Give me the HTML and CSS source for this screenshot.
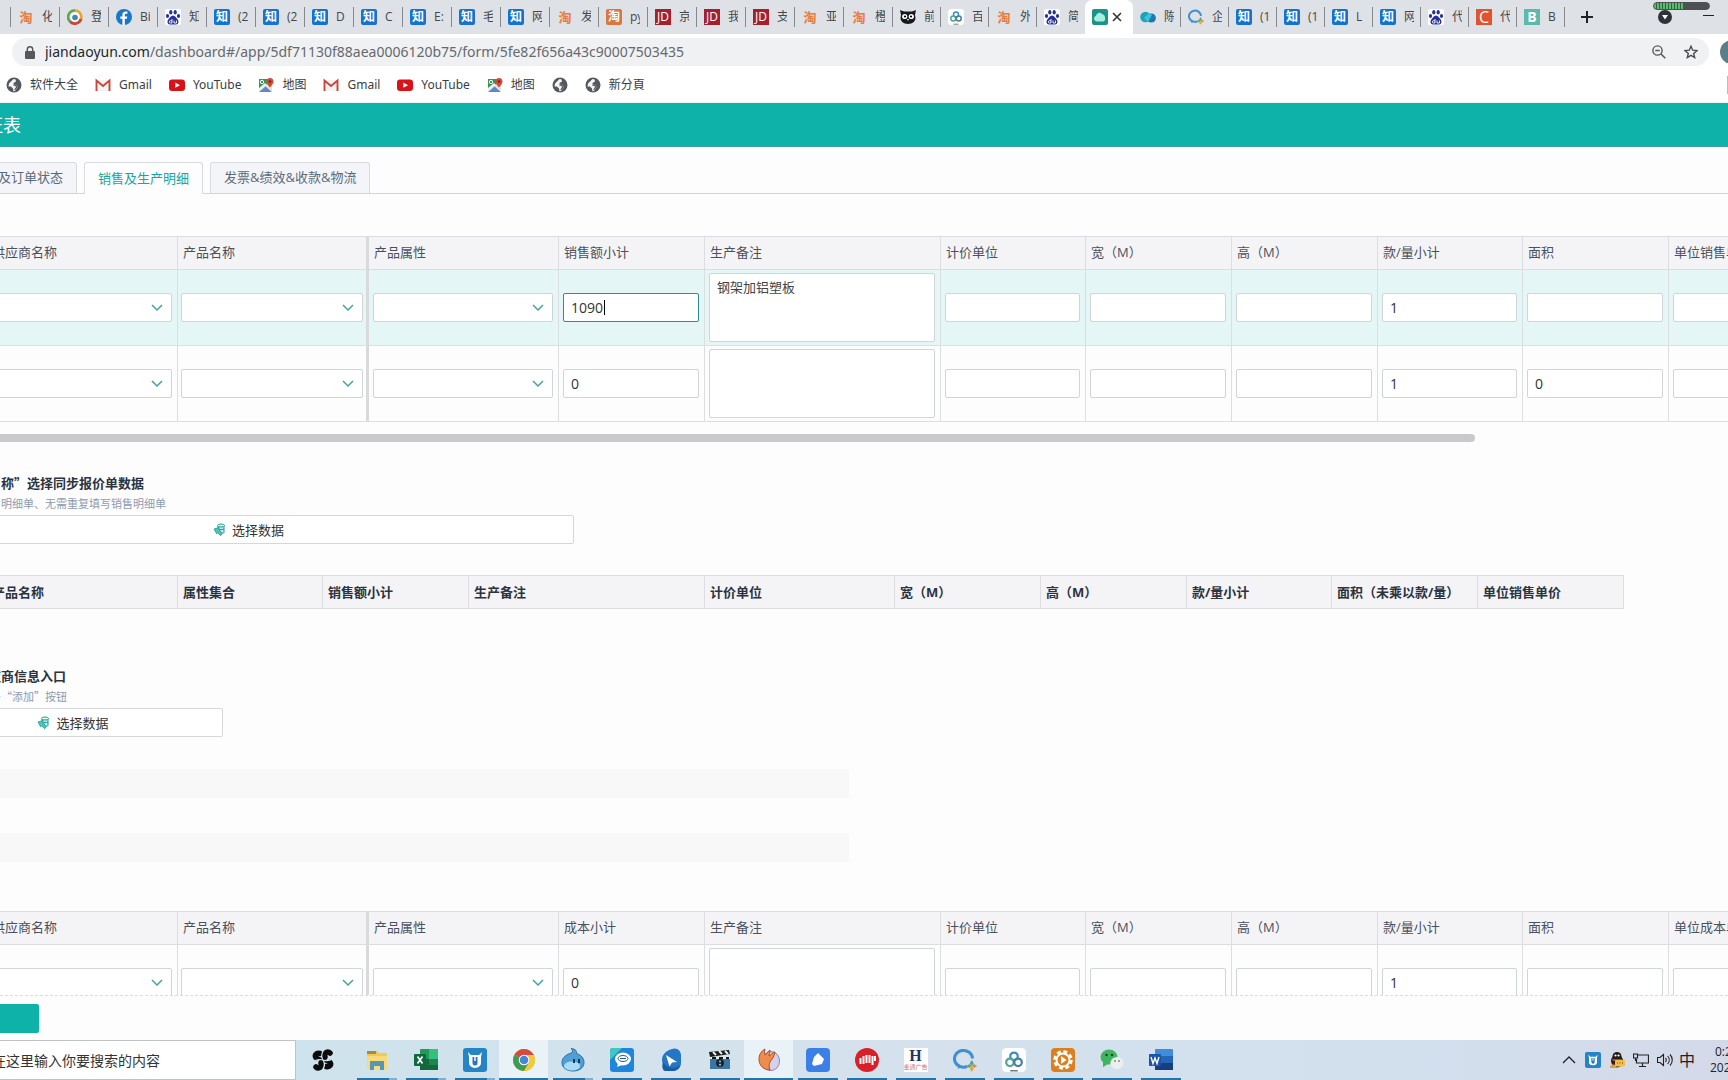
FILE: index.html
```html
<!DOCTYPE html>
<html lang="zh-CN">
<head>
<meta charset="utf-8">
<title>简道云</title>
<link rel="stylesheet" href="styles.css">
</head>
<body>
<svg class="sprite" aria-hidden="true">
  <symbol id="i-globe" viewBox="0 0 16 16"><circle cx="8" cy="8" r="7.500" fill="#55585c"/><path d="M3 6.500L7.500 2l2 .5.5 2-2.500 1.500v1.500l3 .5 1 2-2 3.500-2 1-.5-3-2-2H2.500z" fill="#f4f5f6"/><path d="M7.500 8.500c1.500-.8 3 0 3 1.500s-1.500 1.500-1.500 3" fill="none" stroke="#55585c" stroke-width="1.200"/></symbol>
  <symbol id="i-gmail" viewBox="0 0 16 16"><path d="M1 3h14v11H1z" fill="#f6f2f2"/><path d="M1.500 14V3.500L8 9l6.500-5.500V14" fill="none" stroke="#c8463f" stroke-width="1.900"/></symbol>
  <symbol id="i-yt" viewBox="0 0 16 16"><rect x="0" y="2.500" width="16" height="11.500" rx="3" fill="#d9121a"/><path d="M6.300 5.600v5.200L11 8.200z" fill="#fff"/></symbol>
  <symbol id="i-map" viewBox="0 0 16 16"><path d="M1 2h9v6L1 15z" fill="#38955a"/><path d="M1 15l7-6 6 6z" fill="#5b87d6"/><path d="M7 9l3-3 4 4v5z" fill="#e8e2d0"/><path d="M1 11l6-5 2 2-8 7z" fill="#f0efe8"/><path d="M12 1a3.500 3.500 0 0 0-3.500 3.500C8.500 7 12 10.500 12 10.500S15.500 7 15.500 4.500A3.500 3.500 0 0 0 12 1z" fill="#d24a3e"/><circle cx="12" cy="4.500" r="1.200" fill="#7d2119"/><circle cx="4" cy="5" r="1.700" fill="none" stroke="#fff"/></symbol>
  <symbol id="i-paw" viewBox="0 0 16 16"><rect width="16" height="16" fill="#fff"/><g fill="#27309b"><ellipse cx="2.500" cy="7" rx="1.600" ry="2.100"/><ellipse cx="5.800" cy="3.200" rx="1.600" ry="2.200"/><ellipse cx="10.200" cy="3.200" rx="1.600" ry="2.200"/><ellipse cx="13.500" cy="7" rx="1.600" ry="2.100"/><path d="M8 6.500c2 0 3 2.300 4.500 3.800 1.700 1.700 1.200 5.200-1.500 5.200H5c-2.700 0-3.200-3.500-1.500-5.200C5 8.800 6 6.500 8 6.500z"/></g><path d="M7 10v4H5.500a1 1 0 0 1 0-2.300H7M9 11.500V14h2.500v-2.500" fill="none" stroke="#fff" stroke-width=".9"/></symbol>
  <symbol id="i-owl" viewBox="0 0 16 16"><path d="M0 1l4 1.500h8L16 1l-1 5 .5 3c0 3-3 6-7.500 6S.5 12 .5 9L1 6z" fill="#17191b"/><circle cx="4.700" cy="7.500" r="2.600" fill="#fff"/><circle cx="11.300" cy="7.500" r="2.600" fill="#fff"/><circle cx="5" cy="7.500" r="1.100"/><circle cx="11" cy="7.500" r="1.100"/><path d="M7 10h2l-1 2z" fill="#fff"/></symbol>
  <symbol id="i-pan" viewBox="0 0 16 16"><rect width="16" height="16" rx="3" fill="#fff"/><g fill="none" stroke-width="1.500"><circle cx="8" cy="5.500" r="2.500" stroke="#3b8fc0"/><circle cx="5.300" cy="9.500" r="2.500" stroke="#4fa69b"/><circle cx="10.700" cy="9.500" r="2.500" stroke="#487f9d"/></g><path d="M5.500 15.200h5" stroke="#555" stroke-width=".8"/></symbol>
  <symbol id="i-ring" viewBox="0 0 16 16"><g fill="none" stroke-width="2.600"><path d="M3 12.500A6.500 6.500 0 0 1 8 1.500" stroke="#5aa84a"/><path d="M8 1.500a6.500 6.500 0 0 1 5 10.500" stroke="#e8a53a"/><path d="M14 10A6.500 6.500 0 0 1 3 12.500" stroke="#cc4438"/></g><circle cx="8" cy="8" r="4.500" fill="#fff"/><circle cx="8" cy="8.500" r="2.800" fill="#3f86b5"/></symbol>
  <symbol id="i-fb" viewBox="0 0 16 16"><circle cx="8" cy="8" r="8" fill="#1877c9"/><path d="M8.800 16V9.800h2.100l.4-2.400H8.800V6c0-.8.4-1.300 1.400-1.300h1.200V2.600C9 2.100 6.400 2.500 6.400 5.500v1.900H4.300v2.400h2.100V16z" fill="#fff"/></symbol>
  <symbol id="i-jdy" viewBox="0 0 16 16"><rect width="16" height="16" fill="#1c9385"/><path d="M4.500 12.500a3 3 0 0 1-.5-5.800A3.500 3.500 0 0 1 10 5a3.800 3.800 0 0 1 3 3.500c.6 2.500-.5 4-2.500 4z" fill="#a5efe2"/></symbol>
  <symbol id="i-cloud" viewBox="0 0 16 16"><circle cx="5.500" cy="8" r="5.300" fill="#1fa3b8"/><circle cx="11.300" cy="9" r="4.600" fill="#1b78b5"/><path d="M4 9l5-5 3 2-4 7z" fill="#38c3dc"/></symbol>
  <symbol id="i-wework" viewBox="0 0 16 16"><path d="M9.500 12.300A6 5.600 0 1 1 13 7" fill="none" stroke="#3e8fd3" stroke-width="2"/><path d="M4 11l-1 3 3-1.500" fill="#3e8fd3"/><path d="M12.500 8l1.300 2.200-1.300 1.800-1.300-1.800z" fill="#4ba0a0"/><path d="M12.500 15.800L11.200 14l1.300-2 1.300 2z" fill="#e4a33a"/><path d="M9 12l2-1.400 1.500 1.400L11 13.400z" fill="#62a957"/><path d="M16 12l-2-1.400-1.500 1.400 1.500 1.400z" fill="#db8a45"/></symbol>
  <symbol id="i-data" viewBox="0 0 14 14"><path d="M5 2.500v7c0 1 6 1 6 0v-7" fill="#bfe9e4" stroke="#1c9c92"/><ellipse cx="8" cy="2.500" rx="3.500" ry="1.500" fill="#e5f7f5" stroke="#1c9c92"/><path d="M5 6c1.500.8 4.500.8 6 0" fill="none" stroke="#1c9c92"/><path d="M1 6l5-1.500v2l3 4-1.300 2.300-3-3-1 1z" fill="#4fc4b9" stroke="#1c9c92" stroke-width=".8"/></symbol>
  <symbol id="i-u" viewBox="0 0 24 24"><rect width="24" height="24" rx="3" fill="#2484c6"/><path d="M5 4l3 3h8l3-3-1 5v6a6 5 0 0 1-12 0V9z" fill="#fff"/><path d="M9.500 9h5v6a2.500 2.500 0 0 1-5 0z" fill="#2a75c0"/><path d="M11.300 9h1.400v4h-1.400z" fill="#fff"/></symbol>
</svg>

<header class="browser">
  <div class="tabstrip">
    <div class="tab tab--first"></div>
    <div class="tab"><span class="fav fav--tao">淘</span><span class="tab-name">化</span></div>
    <div class="tab"><svg class="fav"><use href="#i-ring"/></svg><span class="tab-name">登</span></div>
    <div class="tab"><svg class="fav"><use href="#i-fb"/></svg><span class="tab-name">Bi</span></div>
    <div class="tab"><svg class="fav"><use href="#i-paw"/></svg><span class="tab-name">知</span></div>
    <div class="tab"><span class="fav fav--zhi">知</span><span class="tab-name">(2</span></div>
    <div class="tab"><span class="fav fav--zhi">知</span><span class="tab-name">(2</span></div>
    <div class="tab"><span class="fav fav--zhi">知</span><span class="tab-name">D</span></div>
    <div class="tab"><span class="fav fav--zhi">知</span><span class="tab-name">C</span></div>
    <div class="tab"><span class="fav fav--zhi">知</span><span class="tab-name">E:</span></div>
    <div class="tab"><span class="fav fav--zhi">知</span><span class="tab-name">毛</span></div>
    <div class="tab"><span class="fav fav--zhi">知</span><span class="tab-name">网</span></div>
    <div class="tab"><span class="fav fav--tao">淘</span><span class="tab-name">发</span></div>
    <div class="tab"><span class="fav fav--taobox">淘</span><span class="tab-name">py</span></div>
    <div class="tab"><span class="fav fav--jd">JD</span><span class="tab-name">京</span></div>
    <div class="tab"><span class="fav fav--jd">JD</span><span class="tab-name">我</span></div>
    <div class="tab"><span class="fav fav--jd">JD</span><span class="tab-name">支</span></div>
    <div class="tab"><span class="fav fav--tao">淘</span><span class="tab-name">亚</span></div>
    <div class="tab"><span class="fav fav--tao">淘</span><span class="tab-name">橙</span></div>
    <div class="tab tab--slim"><svg class="fav"><use href="#i-owl"/></svg><span class="tab-name">前</span></div>
    <div class="tab tab--slim"><svg class="fav"><use href="#i-pan"/></svg><span class="tab-name">百</span></div>
    <div class="tab tab--slim"><span class="fav fav--tao">淘</span><span class="tab-name">外</span></div>
    <div class="tab tab--slim tab--last"><svg class="fav"><use href="#i-paw"/></svg><span class="tab-name">简</span></div>
    <div class="tab tab--slim tab--on"><svg class="fav"><use href="#i-jdy"/></svg><button class="close" aria-label="关闭"><svg viewBox="0 0 10 10"><path d="M1 1l8 8M9 1L1 9" stroke="#333" stroke-width="1.600"/></svg></button></div>
    <div class="tab tab--slim"><svg class="fav"><use href="#i-cloud"/></svg><span class="tab-name">陈</span></div>
    <div class="tab tab--slim"><svg class="fav"><use href="#i-wework"/></svg><span class="tab-name">企</span></div>
    <div class="tab tab--slim"><span class="fav fav--zhi">知</span><span class="tab-name">(1</span></div>
    <div class="tab tab--slim"><span class="fav fav--zhi">知</span><span class="tab-name">(1</span></div>
    <div class="tab tab--slim"><span class="fav fav--zhi">知</span><span class="tab-name">L</span></div>
    <div class="tab tab--slim"><span class="fav fav--zhi">知</span><span class="tab-name">网</span></div>
    <div class="tab tab--slim"><svg class="fav"><use href="#i-paw"/></svg><span class="tab-name">代</span></div>
    <div class="tab tab--slim"><span class="fav fav--c">C</span><span class="tab-name">代</span></div>
    <div class="tab tab--slim"><span class="fav fav--b">B</span><span class="tab-name">B</span></div>
    <button class="newtab" aria-label="新标签页"><svg viewBox="0 0 12 12"><path d="M6 0v12M0 6h12" stroke="#222" stroke-width="2"/></svg></button>
    <div class="wincontrols">
      <button class="winbtn" aria-label="标签搜索"><svg viewBox="0 0 14 14"><circle cx="7" cy="7" r="7" fill="#303236"/><path d="M4 5h6L7 9.500z" fill="#fff"/></svg></button>
      <button class="winmin" aria-label="最小化"></button>
      <span class="meter"></span>
    </div>
  </div>
  <div class="toolbar">
    <div class="address">
      <svg class="lock" viewBox="0 0 10 13"><rect x="0" y="5" width="10" height="8" rx="1" fill="#55585c"/><path d="M2.300 5.500V3.500a2.700 2.700 0 0 1 5.400 0v2" fill="none" stroke="#55585c" stroke-width="1.500"/></svg>
      <p class="url"><span class="host">jiandaoyun.com</span>/dashboard#/app/5df71130f88aea0006120b75/form/5fe82f656a43c90007503435</p>
      <button class="tool" aria-label="缩放"><svg viewBox="0 0 14 14"><circle cx="5.500" cy="5.500" r="4.600" fill="none" stroke="#55585c" stroke-width="1.400"/><path d="M3.300 5.500h4.400M9 9l4.300 4.300" stroke="#55585c" stroke-width="1.500"/></svg></button>
      <button class="tool" aria-label="收藏"><svg viewBox="0 0 14 14"><path d="M7 1.200l1.700 4 4.300.4-3.300 2.800 1 4.200L7 10.400l-3.700 2.200 1-4.200L1 5.600l4.300-.4z" fill="none" stroke="#4a4d51" stroke-width="1.400"/></svg></button>
    </div>
    <span class="avatar"></span>
  </div>
  <nav class="bookmarks">
    <a href="#"><svg><use href="#i-globe"/></svg>软件大全</a>
    <a href="#"><svg><use href="#i-gmail"/></svg>Gmail</a>
    <a href="#"><svg><use href="#i-yt"/></svg>YouTube</a>
    <a href="#"><svg><use href="#i-map"/></svg>地图</a>
    <a href="#"><svg><use href="#i-gmail"/></svg>Gmail</a>
    <a href="#"><svg><use href="#i-yt"/></svg>YouTube</a>
    <a href="#"><svg><use href="#i-map"/></svg>地图</a>
    <a href="#" aria-label="书签"><svg><use href="#i-globe"/></svg></a>
    <a href="#"><svg><use href="#i-globe"/></svg>新分頁</a>
    <span class="divider"></span>
  </nav>
</header>

<div class="titlebar"><h1>证表</h1></div>

<main class="form">
  <div class="steps">
    <button class="step">及订单状态</button>
    <button class="step step--on">销售及生产明细</button>
    <button class="step">发票&amp;绩效&amp;收款&amp;物流</button>
  </div>

  <div class="sheet">
    <table class="grid grid--sales">
      <colgroup><col class="w-no"><col class="w-xl"><col class="w-xl"><col class="w-l"><col class="w-m"><col class="w-2xl"><col class="w-s"><col class="w-m"><col class="w-m"><col class="w-s"><col class="w-m"><col class="w-m"></colgroup>
      <thead><tr><th></th><th>供应商名称</th><th class="pin">产品名称</th><th>产品属性</th><th>销售额小计</th><th>生产备注</th><th>计价单位</th><th>宽（M）</th><th>高（M）</th><th>款/量小计</th><th>面积</th><th>单位销售单价</th></tr></thead>
      <tbody>
        <tr class="on">
          <td></td>
          <td><select aria-label="供应商名称"><option></option></select></td>
          <td class="pin"><select aria-label="产品名称"><option></option></select></td>
          <td><select aria-label="产品属性"><option></option></select></td>
          <td><div class="editing"><input type="text" aria-label="销售额小计" value="1090"><span class="caret"></span></div></td>
          <td><textarea aria-label="生产备注">钢架加铝塑板</textarea></td>
          <td><input type="text" aria-label="计价单位"></td>
          <td><input type="text" aria-label="宽"></td>
          <td><input type="text" aria-label="高"></td>
          <td><input type="text" aria-label="款/量小计" value="1"></td>
          <td><input type="text" aria-label="面积"></td>
          <td><input type="text" aria-label="单位销售单价"></td>
        </tr>
        <tr>
          <td></td>
          <td><select aria-label="供应商名称"><option></option></select></td>
          <td class="pin"><select aria-label="产品名称"><option></option></select></td>
          <td><select aria-label="产品属性"><option></option></select></td>
          <td><input type="text" aria-label="销售额小计" value="0"></td>
          <td><textarea aria-label="生产备注"></textarea></td>
          <td><input type="text" aria-label="计价单位"></td>
          <td><input type="text" aria-label="宽"></td>
          <td><input type="text" aria-label="高"></td>
          <td><input type="text" aria-label="款/量小计" value="1"></td>
          <td><input type="text" aria-label="面积" value="0"></td>
          <td><input type="text" aria-label="单位销售单价"></td>
        </tr>
      </tbody>
    </table>
    <div class="hscroll"></div>

    <section class="field">
      <h2>名称”选择同步报价单数据</h2>
      <p>售明细单、无需重复填写销售明细单</p>
      <button class="pick pick--wide"><svg><use href="#i-data"/></svg>选择数据</button>
    </section>

    <table class="grid grid--quote">
      <colgroup><col class="w-no"><col class="w-xl"><col class="w-s"><col class="w-m"><col class="w-2xl"><col class="w-l"><col class="w-m"><col class="w-m"><col class="w-s"><col class="w-m"><col class="w-m"></colgroup>
      <thead><tr><th></th><th>产品名称</th><th>属性集合</th><th>销售额小计</th><th>生产备注</th><th>计价单位</th><th>宽（M）</th><th>高（M）</th><th>款/量小计</th><th>面积（未乘以款/量）</th><th>单位销售单价</th></tr></thead>
    </table>

    <section class="field field--supplier">
      <h2>应商信息入口</h2>
      <p>击“添加”按钮</p>
      <button class="pick"><svg><use href="#i-data"/></svg>选择数据</button>
    </section>

    <div class="blank"></div>
    <div class="blank"></div>

    <table class="grid grid--cost">
      <colgroup><col class="w-no"><col class="w-xl"><col class="w-xl"><col class="w-l"><col class="w-m"><col class="w-2xl"><col class="w-s"><col class="w-m"><col class="w-m"><col class="w-s"><col class="w-m"><col class="w-m"></colgroup>
      <thead><tr><th></th><th>供应商名称</th><th class="pin">产品名称</th><th>产品属性</th><th>成本小计</th><th>生产备注</th><th>计价单位</th><th>宽（M）</th><th>高（M）</th><th>款/量小计</th><th>面积</th><th>单位成本单价</th></tr></thead>
      <tbody>
        <tr>
          <td></td>
          <td><select aria-label="供应商名称"><option></option></select></td>
          <td class="pin"><select aria-label="产品名称"><option></option></select></td>
          <td><select aria-label="产品属性"><option></option></select></td>
          <td><input type="text" aria-label="成本小计" value="0"></td>
          <td><textarea aria-label="生产备注"></textarea></td>
          <td><input type="text" aria-label="计价单位"></td>
          <td><input type="text" aria-label="宽"></td>
          <td><input type="text" aria-label="高"></td>
          <td><input type="text" aria-label="款/量小计" value="1"></td>
          <td><input type="text" aria-label="面积"></td>
          <td><input type="text" aria-label="单位成本单价"></td>
        </tr>
      </tbody>
    </table>
  </div>
</main>

<div class="actions"><button class="submit" aria-label="提交"></button></div>

<footer class="taskbar">
  <div class="search"><span>在这里输入你要搜索的内容</span></div>
  <div class="apps">
    <button class="app app--pinned" aria-label="Sogou"><svg viewBox="0 0 24 24"><g fill="none" stroke="#0b0c0d" stroke-width="5.500" stroke-linecap="round"><path d="M9 5.500c-4-1-5.500 2-4 4"/><path d="M14 9c-1-5 3-6 5-4"/><path d="M15 18.500c4 1 5.500-2 4-4"/><path d="M10 15c1 5-3 6-5 4"/><path d="M7 10l10 4M14 6.500l-4 11" stroke-width="3.500"/></g><path d="M12 3c-2 4-2 6 0 9s2 6 0 9M2.500 13c4-2 6-2 9.500-1s6 1 9.500-1" stroke="#cfe3ec" stroke-width="1.200" fill="none"/></svg></button>
    <button class="app multi" aria-label="文件资源管理器"><svg viewBox="0 0 24 24"><path d="M2 3h10l2 2h8v16H2z" fill="#f1c95b"/><path d="M2 3h9v3H2z" fill="#a88b3a"/><path d="M2 8h20v13H2z" fill="#f9da78"/><path d="M5 22v-9h14v9h-4v-4H9v4z" fill="#5796b5"/></svg></button>
    <button class="app multi" aria-label="Excel"><svg viewBox="0 0 24 24"><rect x="6" y="1" width="18" height="21" rx="1" fill="#1f9a57"/><path d="M15 1h9v10h-9z" fill="#34c07c"/><path d="M6 11h18v11H6z" fill="#15683c"/><path d="M15 11h9v6h-9z" fill="#1f8550"/><rect x="0" y="6" width="12" height="12" rx="1" fill="#0f6a3b"/><path d="M3.500 8.500l5 7M8.500 8.500l-5 7" stroke="#fff" stroke-width="1.700"/></svg></button>
    <button class="app multi" aria-label="UU"><svg><use href="#i-u"/></svg></button>
    <button class="app app--on" aria-label="Chrome"><svg viewBox="0 0 24 24"><circle cx="12" cy="12" r="11" fill="#e9bf3c"/><path d="M12 12L2.500 6.500A11 11 0 0 1 21.500 6.500L22 7H12z" fill="#d64b3f"/><path d="M12 12L2.500 6.500A11 11 0 0 0 12 23l4-7z" fill="#3f9b54"/><path d="M12 7h10a11 11 0 0 1-10 16l5-8z" fill="#f0c93f"/><circle cx="12" cy="12" r="5.300" fill="#fff"/><circle cx="12" cy="12" r="4.300" fill="#4a83d8"/></svg></button>
    <button class="app multi" aria-label="旺旺"><svg viewBox="0 0 24 24"><path d="M10 5c2-1 2-3 0-4.500 5 .5 6 3 5.500 5C20 7 23 10 23 14.500 23 20 18 23 12 23S1 20 1 14.500C1 9 6 6.500 10 5z" fill="#4f9ed6" stroke="#2a6da6"/><ellipse cx="11" cy="18" rx="8" ry="4.500" fill="#a7dcf5"/><path d="M13 11v4M18 11v4" stroke="#14385a" stroke-width="2"/></svg></button>
    <button class="app" aria-label="客服"><svg viewBox="0 0 24 24"><rect width="24" height="24" rx="3" fill="#1f86dd"/><path d="M0 3a3 3 0 0 1 3-3h9L0 12z" fill="#43c5c0"/><ellipse cx="13" cy="11" rx="8" ry="6.500" fill="#fff"/><path d="M8 15l-1 4 5-2z" fill="#fff"/><ellipse cx="13" cy="10.500" rx="5" ry="3" fill="none" stroke="#1c5d95"/><path d="M10 10.500h6" stroke="#1c5d95"/></svg></button>
    <button class="app" aria-label="飞行"><svg viewBox="0 0 24 24"><path d="M13 1c5-2 9 2 9 6v8c0 5-4 8-8 8H7c-3 0-4-4-3-7-3-6 1-13 9-15z" fill="#2477c4"/><path d="M4 14c4 6 10 8 17 3-1 4-4 6-8 6H7c-4 0-4-5-3-9z" fill="#1b5da5"/><path d="M7 7l11 7-5 .5-2.500 4z" fill="#fff"/></svg></button>
    <button class="app" aria-label="视频"><svg viewBox="0 0 24 24"><path d="M2 10h20v11H2z" fill="#3b76a4"/><path d="M1 4l20-2 1 4L2 9z" fill="#1a1c1e"/><path d="M5 4l3 3M11 3l3 3M17 3l3 3M2 10h20" stroke="#e7eef2" stroke-width="2"/><path d="M4 10h4M11 10h4M18 10h3" stroke="#151515" stroke-width="2"/><circle cx="12" cy="15" r="4" fill="#172633"/><circle cx="12" cy="13.500" r="1" fill="#a9c6db"/><circle cx="12" cy="16.800" r="1" fill="#a9c6db"/></svg></button>
    <button class="app app--on" aria-label="火狐"><svg viewBox="0 0 24 24"><ellipse cx="14" cy="13" rx="8.500" ry="9.500" fill="#d7d0ea" stroke="#8e80b5"/><path d="M8 1c-1 3 0 5 0 6 2-1 3-4 5-5 0 3-1 4-1 6 2-1 4-4 6-4-1 3-1 5-3 7-2 3-4 5-2 11C7 22 2 18 2 11 2 7 4 3 8 1z" fill="#ef8c4c" stroke="#a6502a"/></svg></button>
    <button class="app" aria-label="钉图"><svg viewBox="0 0 24 24"><rect width="24" height="24" rx="4" fill="#3a80e6"/><path d="M12 5l6 6-2 5-8 2-2-2 2-7z" fill="#fff"/></svg></button>
    <button class="app" aria-label="录音"><svg viewBox="0 0 24 24"><circle cx="12" cy="12" r="12" fill="#d9202a"/><path d="M5.500 10v6M8.500 8v8M11.500 7v8M14.500 7v8M17.500 8v9M20 8v5" stroke="#fff" stroke-width="2"/></svg></button>
    <button class="app" aria-label="金通广告"><span class="h-logo"><b>H</b><i>金通广告</i></span></button>
    <button class="app" aria-label="企业微信"><svg><use href="#i-wework"/></svg></button>
    <button class="app" aria-label="百度网盘"><svg><use href="#i-pan"/></svg></button>
    <button class="app" aria-label="播放器"><svg viewBox="0 0 24 24"><rect width="24" height="24" rx="4" fill="#dd7f1f"/><circle cx="12" cy="12" r="8.500" fill="none" stroke="#fff" stroke-width="2.500" stroke-dasharray="4 2.700"/><circle cx="12" cy="12" r="6.500" fill="#dd7f1f" stroke="#fff" stroke-width="2"/><path d="M10 8v8l5.500-4z" fill="#fff"/></svg></button>
    <button class="app" aria-label="微信"><svg viewBox="0 0 24 24"><ellipse cx="9" cy="9" rx="8.500" ry="7.500" fill="#3fb55d"/><path d="M3 14l0 5 5-3z" fill="#3fb55d"/><circle cx="6.500" cy="7" r="1.200" fill="#173f22"/><circle cx="12" cy="7" r="1.200" fill="#173f22"/><ellipse cx="17" cy="15" rx="6.700" ry="6" fill="#eceff0"/><circle cx="15" cy="13" r="1" fill="#888"/><circle cx="19" cy="13" r="1" fill="#888"/></svg></button>
    <button class="app" aria-label="Word"><svg viewBox="0 0 24 24"><rect x="6" y="1" width="18" height="21" rx="1" fill="#3f8ddb"/><path d="M6 8h18v7H6z" fill="#2565b5"/><path d="M6 15h18v7H6z" fill="#173f80"/><rect x="0" y="6" width="12" height="12" rx="1" fill="#1b55a5"/><path d="M2 9l2 6.500L6 10l2 5.500L10 9" stroke="#fff" stroke-width="1.400" fill="none"/></svg></button>
  </div>
  <div class="tray">
    <button aria-label="显示隐藏的图标"><svg viewBox="0 0 16 16"><path d="M2 11l6-6 6 6" fill="none" stroke="#222" stroke-width="1.300"/></svg></button>
    <button aria-label="UU"><svg><use href="#i-u"/></svg></button>
    <button aria-label="QQ"><svg viewBox="0 0 16 16"><ellipse cx="8" cy="9" rx="6" ry="6.500" fill="#2a2220"/><circle cx="8" cy="4.500" r="4.500" fill="#241c1a"/><circle cx="6.500" cy="3.500" r="1.100" fill="#fff"/><circle cx="9.500" cy="3.500" r="1.100" fill="#fff"/><path d="M3 7h10l-1 2H4z" fill="#cf3b2a"/><path d="M1 15c1-3 4-3 6-1v2H1z" fill="#e79c2d"/><rect x="6" y="8" width="10" height="6.500" rx="1" fill="#f3bd4a"/><path d="M8 11h1M10.500 11h1M13 11h1" stroke="#7c4a10"/></svg></button>
    <button aria-label="网络"><svg viewBox="0 0 16 16"><path d="M5 3h10.500v8H3.500V7M9.500 11v3.500M6 14.500h7" fill="none" stroke="#222" stroke-width="1.200"/><path d="M.5 2h4v4h-4zM2.500 6v3" fill="none" stroke="#222" stroke-width="1.200"/></svg></button>
    <button aria-label="音量"><svg viewBox="0 0 16 16"><path d="M.5 5.500H3L6.500 2.500v11L3 10.500H.5zM8.500 6c1 1 1 3 0 4M10.700 4c2 2.300 2 5.700 0 8M13 2.500c3 3 3 8 0 11" fill="none" stroke="#222" stroke-width="1.100"/></svg></button>
    <button class="ime">中</button>
    <div class="clock"><span class="time">0:24</span><span>2020/12/28</span></div>
  </div>
</footer>
</body>
</html>
```
FILE: styles.css
```css
* { box-sizing: border-box; margin: 0; padding: 0; }
body {
  display: flex;
  flex-direction: column;
  height: 100vh;
  overflow: hidden;
  background: #fdfdfe;
  color: #3f4650;
  font: 13px/20px "Open Sans", "Noto Sans CJK SC", sans-serif;
}
button { border: 0; background: none; font: inherit; color: inherit; }
svg { display: block; }
.sprite { position: absolute; width: 0; height: 0; }

/* Browser chrome */
.browser { flex: none; background: #fff; }
.tabstrip { display: flex; align-items: center; height: 34px; background: #dee1e6; overflow: hidden; }
.tab {
  flex: 0 0 49px;
  display: flex;
  align-items: center;
  gap: 8px;
  height: 20px;
  padding-left: 7px;
  border-right: 1px solid #85888d;
  font-size: 12px;
}
.tab--first { flex-basis: 11px; }
.tab--slim { flex-basis: 48px; }
.tab--last { border-right-color: transparent; }
.tab--on {
  height: 34px;
  gap: 4px;
  background: #fff;
  border-right: 0;
  border-radius: 7px 7px 0 0;
}
.tab-name { width: 10px; overflow: hidden; white-space: nowrap; color: #44474b; }
.fav { flex: none; width: 16px; height: 16px; border-radius: 2px; text-align: center; line-height: 16px; overflow: hidden; }
.fav--tao { color: #ea7a40; font-size: 13px; font-weight: 700; }
.fav--taobox { color: #fff; background: #d9773f; font-size: 12px; font-weight: 700; }
.fav--zhi { color: #fff; background: #1772cf; font-size: 12px; font-weight: 700; }
.fav--jd { color: #fff; background: #a5202f; font-size: 12px; border-radius: 0; }
.fav--c { color: #fff; background: #e0532f; font-size: 16px; border-radius: 0; }
.fav--b { color: #fff; background: #5dbaa8; font-size: 14px; font-weight: 700; border-radius: 0; }
.close svg { width: 10px; height: 10px; }
.newtab { margin-left: 16px; }
.newtab svg { width: 12px; height: 12px; }
.wincontrols { position: relative; display: flex; align-items: center; gap: 31px; margin-left: auto; padding-right: 14px; }
.winbtn svg { width: 14px; height: 14px; }
.winmin { width: 11px; height: 1px; margin-bottom: 4px; background: #222; }
.meter {
  position: absolute;
  top: -8px;
  right: 18px;
  width: 57px;
  height: 8px;
  border: 1px solid #4d5054;
  border-radius: 4px;
  background: linear-gradient(90deg, transparent 55%, #4d5054 55%), repeating-linear-gradient(90deg, #55c06a 0 2px, #3f5b46 2px 3px);
}
.toolbar { display: flex; align-items: center; gap: 11px; height: 36px; padding-left: 12px; overflow: hidden; }
.address {
  flex: 1;
  display: flex;
  align-items: center;
  gap: 18px;
  height: 28px;
  padding: 0 11px 0 13px;
  border-radius: 14px;
  background: #f0f1f3;
}
.lock { flex: none; width: 10px; height: 13px; }
.url { flex: 1; margin-left: -8px; font-family: "Noto Sans", sans-serif; font-size: 14px; color: #66696d; white-space: nowrap; overflow: hidden; }
.host { color: #24272a; }
.tool svg { width: 14px; height: 14px; }
.avatar { flex: none; width: 24px; height: 24px; margin-right: -16px; border-radius: 12px; background: #5e7d8b; }
.bookmarks { display: flex; align-items: center; gap: 17px; height: 33px; padding: 0 0 2px 6px; border-bottom: 1px solid #e3f7f5; }
.bookmarks a { display: flex; align-items: center; gap: 8px; color: #3a3d41; font-family: "Noto Sans", "Noto Sans CJK SC", sans-serif; font-size: 12px; text-decoration: none; }
.bookmarks svg { width: 16px; height: 16px; }
.divider { width: 1px; height: 18px; margin-left: auto; background: #b9bcc0; }

.titlebar { flex: none; height: 44px; background: #0fb2a9; border-bottom: 1px solid #3aa59d; overflow: hidden; }
.titlebar h1 { margin-left: -15px; font-size: 18px; font-weight: 400; line-height: 44px; color: #fff; }

/* Form body, scrolled to the right */
.form { flex: 1; min-height: 0; overflow: hidden; border-bottom: 1px dashed #dcdde0; }
.steps { display: flex; align-items: flex-end; gap: 7px; height: 47px; border-bottom: 1px solid #d3d6d9; }
.step {
  height: 31px;
  padding: 0 13px 2px;
  border: 1px solid #d8dbe0;
  border-bottom: 0;
  border-radius: 3px 3px 0 0;
  background: #f3f5f9;
  color: #5b6a7c;
}
.step:first-child { margin-left: -16px; }
.step--on { height: 32px; margin-bottom: -1px; background: #fdfdfe; color: #15a89f; }
.sheet { margin-left: -77px; padding-top: 42px; }

.grid { width: 0; table-layout: fixed; border-spacing: 0; border-top: 1px solid #dcdde0; }
.w-no { width: 64px; }
.w-s { width: 145px; }
.w-m { width: 146px; }
.w-l { width: 190px; }
.w-xl { width: 191px; }
.w-2xl { width: 236px; }
.grid th {
  height: 33px;
  padding: 0 0 2px 5px;
  border-right: 1px solid #dcdde0;
  border-bottom: 1px solid #dcdde0;
  background: #f4f4f7;
  font-weight: 400;
  text-align: left;
  white-space: nowrap;
  color: #4a515c;
}
.grid td { padding: 3px 5px 3px 4px; border-right: 1px solid #dcdfe1; border-bottom: 1px solid #dcdfe1; vertical-align: middle; }
.grid .pin { border-right: 3px solid #d8dadc; }
.grid td.pin { padding-left: 3px; padding-right: 3px; }
.grid .on td { background: #e4f6f6; }
.grid--quote { margin-top: 31px; }
.grid--quote th { padding-bottom: 0; font-weight: 700; color: #2b333f; }
.grid--cost { margin-top: 49px; }
input, select, textarea {
  display: block;
  width: 100%;
  height: 29px;
  padding: 0 7px 1px;
  border: 1px solid #d0d5d8;
  border-radius: 2px;
  background: #fff;
  color: #333;
  font: 14px/20px "Open Sans", "Noto Sans CJK SC", sans-serif;
  outline: 0;
}
select {
  appearance: none;
  background: #fff url("data:image/svg+xml,%3Csvg xmlns='http://www.w3.org/2000/svg' width='12' height='8'%3E%3Cpath d='M1 1l5 5 5-5' fill='none' stroke='%2345a39c' stroke-width='1.500'/%3E%3C/svg%3E") no-repeat right 8px center;
}
textarea { height: 69px; padding: 3px 7px; font-size: 13px; resize: none; overflow: hidden; color: #444; }
.editing { position: relative; }
.editing input { border-color: #2f8d92; }
.caret { position: absolute; left: 41px; top: 7px; width: 1px; height: 15px; background: #000; }
.hscroll { width: 86%; height: 8px; margin-top: 12px; border-radius: 4px; background: #c9c8cb; }

.field { padding-top: 31px; font-family: "Noto Sans CJK SC", sans-serif; }
.field h2 { padding-left: 65px; font-size: 13px; font-weight: 700; line-height: 20px; color: #2b333f; }
.field p { padding-left: 67px; font-size: 11px; line-height: 20px; color: #8d9bb0; }
.field--supplier { padding-top: 57px; }
.pick {
  display: flex;
  align-items: center;
  justify-content: center;
  gap: 5px;
  width: 300px;
  height: 29px;
  margin-top: 2px;
  border: 1px solid #d5d7da;
  border-radius: 2px;
  background: #fff;
  color: #333;
}
.pick--wide { width: 651px; }
.pick svg { width: 14px; height: 14px; }
.blank { width: 926px; height: 29px; margin-top: 35px; background: #f8f8f9; }
.field + .blank { margin-top: 32px; }

.actions { flex: none; height: 44px; padding-top: 8px; }
.submit { display: block; width: 39px; height: 29px; border-radius: 0 2px 2px 0; background: #0fb2a9; }

/* Taskbar */
.taskbar { flex: none; display: flex; height: 40px; background: linear-gradient(90deg, #cde3ec 15%, #d5e2ec 45%, #d2e0ee 80%, #d4d9e8); overflow: hidden; }
.search { flex: 0 0 296px; border: 1px solid #bfc3c6; border-left: 0; background: #fff; overflow: hidden; }
.search span { display: block; margin-left: -8px; font-size: 14px; line-height: 40px; color: #333; white-space: nowrap; }
.apps { display: flex; padding-left: 2px; }
.app { position: relative; flex: 0 0 49px; display: flex; align-items: center; justify-content: center; }
.app svg { width: 24px; height: 24px; }
.app::after { content: ""; position: absolute; left: 5px; bottom: 0; width: 40px; height: 2px; background: #2574a9; }
.multi::after { background: linear-gradient(90deg, #2574a9 80%, #83aed0 80%); }
.app--pinned { margin-right: 5px; }
.app--pinned::after { display: none; }
.app--on { background: #e9f2f7; }
.app--on::after { left: 0; width: 100%; }
.h-logo { display: flex; flex-direction: column; align-items: center; width: 24px; height: 24px; background: #fff; overflow: hidden; }
.h-logo b { font: 700 16px/15px "Liberation Serif", serif; color: #243066; }
.h-logo i { font-size: 6px; font-style: normal; line-height: 8px; color: #c77; white-space: nowrap; }
.tray { display: flex; align-items: center; margin-left: auto; }
.tray button { flex: 0 0 24px; display: flex; justify-content: center; }
.tray svg { width: 16px; height: 16px; }
.tray .ime { flex-basis: 20px; font-size: 16px; color: #222; }
.clock { width: 18px; margin-left: 13px; overflow: hidden; font-size: 12px; line-height: 16px; color: #222; white-space: nowrap; }
.clock span { display: block; }
.clock .time { padding-left: 5px; }
```
